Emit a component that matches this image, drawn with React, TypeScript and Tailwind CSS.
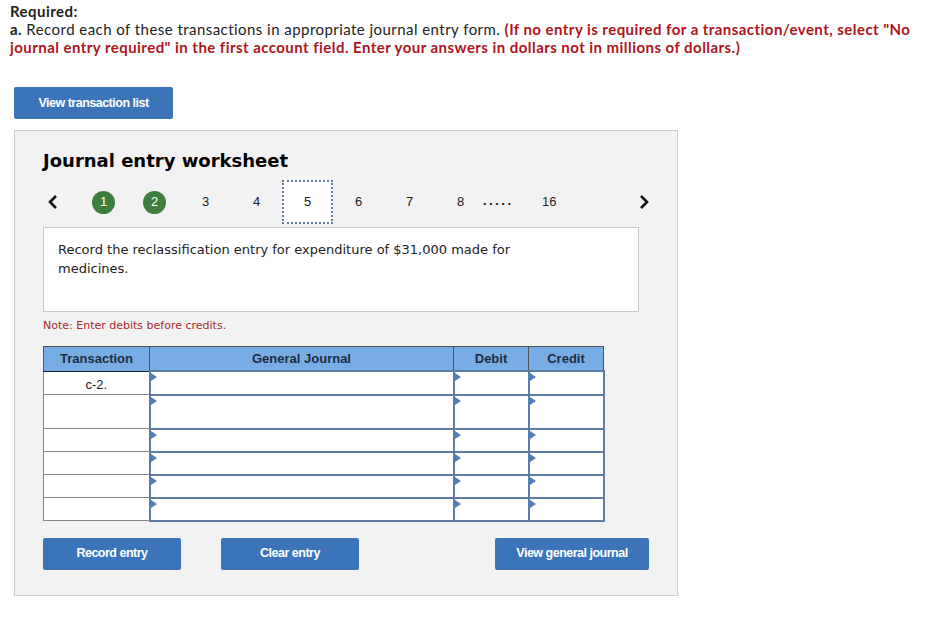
import React from 'react'

const rows = [
  { label: 'c-2.', h: 'h-[23px]' },
  { label: '', h: 'h-[34px]' },
  { label: '', h: 'h-[23px]' },
  { label: '', h: 'h-[23px]' },
  { label: '', h: 'h-[23px]' },
  { label: '', h: 'h-[23px]' },
]

function Tri() {
  return (
    <span className="absolute left-0 top-[1px] w-0 h-0 border-t-[4px] border-b-[4px] border-l-[6px] border-t-transparent border-b-transparent border-l-[#4a7fc0]" />
  )
}

function InputCell({ w }: { w: string }) {
  return (
    <td className={`relative border-2 border-[#5d7ba3] bg-white p-0 ${w}`}>
      <Tri />
    </td>
  )
}

function BlueButton({ children, w }: { children: React.ReactNode; w: string }) {
  return (
    <button
      className={`${w} h-[32px] rounded-[2px] bg-[#3b74b9] text-white text-[12.5px] font-bold tracking-[-0.5px]`}
      style={{ fontFamily: '"Liberation Sans", Arial, sans-serif' }}
    >
      {children}
    </button>
  )
}

export default function App() {
  const nav = ['3', '4']
  return (
    <div className="w-[940px] h-[638px] bg-white" style={{ fontFamily: 'Lato, "Open Sans", sans-serif' }}>
      <div className="w-[925px] px-[10px] pt-[2px] text-[15px] leading-[18px] tracking-[0.45px] text-[#222]">
        <div className="font-bold">Required:</div>
        <p>
          <b>a.</b> Record each of these transactions in appropriate journal entry form.{' '}
          <b className="text-[#b0141d]">
            (If no entry is required for a transaction/event, select "No journal entry required" in the first account field. Enter your answers in dollars not in millions of dollars.)
          </b>
        </p>
      </div>

      <div className="pl-[14px] pt-[31px]">
        <BlueButton w="w-[159px]">View transaction list</BlueButton>
      </div>

      <div className="ml-[14px] mt-[11px] w-[664px] h-[466px] border border-[#cccccc] bg-[#f2f2f2] pl-[28px]">
        <div
          className="pt-[16px] text-[18px] font-bold text-black"
          style={{ fontFamily: '"DejaVu Sans", Verdana, sans-serif' }}
        >
          Journal entry worksheet
        </div>

        <div className="flex items-center h-[44px] mt-[6px] -ml-[16px] text-[13px] text-[#222]" style={{ fontFamily: '"Liberation Sans", Arial, sans-serif' }}>
          <div className="w-[51px] flex justify-center">
            <svg width="10" height="16" viewBox="0 0 10 16">
              <path d="M8 2 L2 8 L8 14" stroke="#111" strokeWidth="2.6" fill="none" />
            </svg>
          </div>
          {['1', '2'].map((n) => (
            <div key={n} className="w-[51px] flex justify-center">
              <span className="w-[23px] h-[23px] rounded-full bg-[#3f7d3c] text-white flex items-center justify-center">{n}</span>
            </div>
          ))}
          {nav.map((n) => (
            <div key={n} className="w-[51px] flex justify-center">{n}</div>
          ))}
          <div className="w-[51px] flex justify-center">
            <span className="w-[53px] h-[44px] border-2 border-dotted border-[#5d7ba3] bg-white flex items-center justify-center">5</span>
          </div>
          {['6', '7', '8'].map((n) => (
            <div key={n} className="w-[51px] flex justify-center">{n}</div>
          ))}
          <div className="-ml-[3px] w-[32px] font-bold tracking-[2.5px] pb-[2px] text-[#111]">.....</div>
          <div className="ml-[27px]">16</div>
          <div className="ml-[83px]">
            <svg width="10" height="16" viewBox="0 0 10 16">
              <path d="M2 2 L8 8 L2 14" stroke="#111" strokeWidth="2.6" fill="none" />
            </svg>
          </div>
        </div>

        <div
          className="mt-[3px] w-[596px] h-[85px] border border-[#c8c8c8] bg-white px-[14px] pt-[12px] text-[13px] leading-[19px] text-[#222]"
          style={{ fontFamily: '"DejaVu Sans", Verdana, sans-serif' }}
        >
          Record the reclassification entry for expenditure of $31,000 made for
          <br />
          medicines.
        </div>

        <div className="mt-[6px] text-[11px] text-[#a52a2a]" style={{ fontFamily: '"DejaVu Sans", Verdana, sans-serif' }}>
          Note: Enter debits before credits.
        </div>

        <table className="mt-[11px] border-collapse text-[13px]" style={{ fontFamily: '"Liberation Sans", Arial, sans-serif' }}>
          <thead>
            <tr className="h-[25px] bg-[#78ace4] text-[#1d2c40] font-bold">
              <th className="w-[106px] border border-[#555] border-b-[#1a2233] font-bold">Transaction</th>
              <th className="w-[304px] border border-[#555] border-b-[#1a2233] font-bold">General Journal</th>
              <th className="w-[75px] border border-[#555] border-b-[#1a2233] font-bold">Debit</th>
              <th className="w-[75px] border border-[#555] border-b-[#1a2233] font-bold">Credit</th>
            </tr>
          </thead>
          <tbody>
            {rows.map((r, i) => (
              <tr key={i} className={r.h}>
                <td className="border border-[#888] bg-white text-center align-top pt-[3px] text-[#222]">{r.label}</td>
                <InputCell w="w-[304px]" />
                <InputCell w="w-[75px]" />
                <InputCell w="w-[75px]" />
              </tr>
            ))}
          </tbody>
        </table>

        <div className="flex mt-[16px]">
          <BlueButton w="w-[138px]">Record entry</BlueButton>
          <div className="ml-[40px]">
            <BlueButton w="w-[138px]">Clear entry</BlueButton>
          </div>
          <div className="ml-[136px]">
            <BlueButton w="w-[154px]">View general journal</BlueButton>
          </div>
        </div>
      </div>
    </div>
  )
}
